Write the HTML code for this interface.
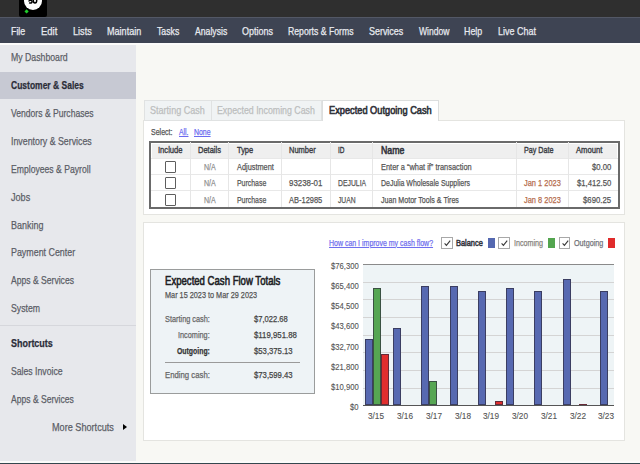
<!DOCTYPE html><html><head><meta charset="utf-8"><style>*{margin:0;padding:0}html,body{width:640px;height:464px;overflow:hidden;background:#f8f8f4}
.t{-webkit-text-stroke:0.25px currentColor;position:absolute;white-space:nowrap;line-height:normal;transform-origin:0 0;font-family:"Liberation Sans",sans-serif}</style></head><body><div style="position:absolute;left:0px;top:0px;width:640px;height:17px;background:#2f2f2f"></div>
<div style="position:absolute;left:19px;top:0px;width:28px;height:17px;background:#000;border-radius:0 0 2px 2px"></div>
<div style="position:absolute;left:24px;top:-8px;width:18px;height:18px;border-radius:50%;background:#fff"></div>
<svg style="position:absolute;left:0;top:0" width="60" height="17"><path d="M29.3,-1.2 L29.3,0.6 Q30.6,-0.3 31.6,0.6 Q32.5,1.6 31.7,2.6 Q30.5,3.6 29.2,2.6" fill="none" stroke="#000" stroke-width="1.5"/><ellipse cx="35" cy="-0.4" rx="1.75" ry="3.5" fill="none" stroke="#000" stroke-width="1.5"/></svg>
<div style="position:absolute;left:24.5px;top:10px;width:3.2px;height:3.2px;background:#1fcc2a;transform:rotate(45deg)"></div>
<div style="position:absolute;left:0px;top:17px;width:640px;height:26px;background:#3e4453;box-shadow:inset 0 1px 0 #535866"></div>
<div class="t" style="left:11.25px;top:24.73px;font-size:10.8px;font-weight:400;color:#e9ebf0;transform:scaleX(0.8190);">File</div>
<div class="t" style="left:40.75px;top:24.73px;font-size:10.8px;font-weight:400;color:#e9ebf0;transform:scaleX(0.8733);">Edit</div>
<div class="t" style="left:72.50px;top:24.73px;font-size:10.8px;font-weight:400;color:#e9ebf0;transform:scaleX(0.8444);">Lists</div>
<div class="t" style="left:107.00px;top:24.73px;font-size:10.8px;font-weight:400;color:#e9ebf0;transform:scaleX(0.8390);">Maintain</div>
<div class="t" style="left:157.00px;top:24.73px;font-size:10.8px;font-weight:400;color:#e9ebf0;transform:scaleX(0.8060);">Tasks</div>
<div class="t" style="left:194.50px;top:24.73px;font-size:10.8px;font-weight:400;color:#e9ebf0;transform:scaleX(0.8019);">Analysis</div>
<div class="t" style="left:242.00px;top:24.73px;font-size:10.8px;font-weight:400;color:#e9ebf0;transform:scaleX(0.8330);">Options</div>
<div class="t" style="left:288.25px;top:24.73px;font-size:10.8px;font-weight:400;color:#e9ebf0;transform:scaleX(0.8025);">Reports &amp; Forms</div>
<div class="t" style="left:368.75px;top:24.73px;font-size:10.8px;font-weight:400;color:#e9ebf0;transform:scaleX(0.8269);">Services</div>
<div class="t" style="left:418.75px;top:24.73px;font-size:10.8px;font-weight:400;color:#e9ebf0;transform:scaleX(0.7935);">Window</div>
<div class="t" style="left:464.25px;top:24.73px;font-size:10.8px;font-weight:400;color:#e9ebf0;transform:scaleX(0.8215);">Help</div>
<div class="t" style="left:497.50px;top:24.73px;font-size:10.8px;font-weight:400;color:#e9ebf0;transform:scaleX(0.8328);">Live Chat</div>
<div style="position:absolute;left:136px;top:44px;width:504px;height:418px;background:#f8f8f4"></div>
<div style="position:absolute;left:0px;top:44px;width:136px;height:418px;background:#e7e8ec"></div>
<div style="position:absolute;left:0px;top:43px;width:640px;height:2px;background:#fcfcfb"></div>
<div style="position:absolute;left:0px;top:461px;width:640px;height:2px;background:#fbfbfa"></div>
<div style="position:absolute;left:0px;top:462.7px;width:640px;height:1.3px;background:#34474e"></div>
<div style="position:absolute;left:0px;top:72px;width:136px;height:27px;background:#c7c9d3"></div>
<div style="position:absolute;left:0px;top:324.5px;width:136px;height:1px;background:#d6d7dc"></div>
<div class="t" style="left:11.20px;top:49.80px;font-size:11.6px;font-weight:400;color:#5b5d66;transform:scaleX(0.7516);">My Dashboard</div>
<div class="t" style="left:11.20px;top:77.90px;font-size:11.6px;font-weight:700;color:#2b2d38;transform:scaleX(0.7332);">Customer &amp; Sales</div>
<div class="t" style="left:11.20px;top:105.70px;font-size:11.6px;font-weight:400;color:#5b5d66;transform:scaleX(0.7404);">Vendors &amp; Purchases</div>
<div class="t" style="left:11.20px;top:134.00px;font-size:11.6px;font-weight:400;color:#5b5d66;transform:scaleX(0.7596);">Inventory &amp; Services</div>
<div class="t" style="left:11.20px;top:161.90px;font-size:11.6px;font-weight:400;color:#5b5d66;transform:scaleX(0.7438);">Employees &amp; Payroll</div>
<div class="t" style="left:11.20px;top:189.80px;font-size:11.6px;font-weight:400;color:#5b5d66;transform:scaleX(0.7837);">Jobs</div>
<div class="t" style="left:11.20px;top:217.70px;font-size:11.6px;font-weight:400;color:#5b5d66;transform:scaleX(0.7729);">Banking</div>
<div class="t" style="left:11.20px;top:244.90px;font-size:11.6px;font-weight:400;color:#5b5d66;transform:scaleX(0.7659);">Payment Center</div>
<div class="t" style="left:11.20px;top:273.30px;font-size:11.6px;font-weight:400;color:#5b5d66;transform:scaleX(0.7403);">Apps &amp; Services</div>
<div class="t" style="left:11.20px;top:301.10px;font-size:11.6px;font-weight:400;color:#5b5d66;transform:scaleX(0.7524);">System</div>
<div class="t" style="left:11.20px;top:335.90px;font-size:11.6px;font-weight:700;color:#2b2d38;transform:scaleX(0.7721);">Shortcuts</div>
<div class="t" style="left:11.20px;top:363.90px;font-size:11.6px;font-weight:400;color:#5b5d66;transform:scaleX(0.7479);">Sales Invoice</div>
<div class="t" style="left:11.20px;top:391.90px;font-size:11.6px;font-weight:400;color:#5b5d66;transform:scaleX(0.7380);">Apps &amp; Services</div>
<div class="t" style="left:51.90px;top:419.70px;font-size:11.6px;font-weight:400;color:#5b5d66;transform:scaleX(0.7871);">More Shortcuts</div>
<div style="position:absolute;left:122.5px;top:424.3px;width:0;height:0;border-left:4.5px solid #000;border-top:3px solid transparent;border-bottom:3px solid transparent"></div>
<div style="position:absolute;left:143px;top:120px;width:482px;height:94px;background:#fff;border:1px solid #e4e4e0;box-sizing:border-box"></div>
<div style="position:absolute;left:143px;top:120px;width:482px;height:95px;background:#fff;border:1px solid #e4e4e0;box-sizing:border-box"></div>
<div style="position:absolute;left:144px;top:100px;width:68px;height:21px;background:#f0f3f4;border:1px solid #e0e2e2;box-sizing:border-box"></div>
<div style="position:absolute;left:211px;top:100px;width:111px;height:21px;background:#f0f3f4;border:1px solid #e0e2e2;box-sizing:border-box"></div>
<div style="position:absolute;left:322px;top:100px;width:117px;height:21px;background:#fff;border:1px solid #dcdede;border-bottom:none;box-sizing:border-box"></div>
<div class="t" style="left:150.40px;top:105.09px;font-size:10.4px;font-weight:400;color:#bcbebe;transform:scaleX(0.8712);">Starting Cash</div>
<div class="t" style="left:217.20px;top:105.09px;font-size:10.4px;font-weight:400;color:#bcbebe;transform:scaleX(0.8476);">Expected Incoming Cash</div>
<div class="t" style="left:329.30px;top:103.91px;font-size:10.6px;font-weight:400;color:#2e3038;transform:scaleX(0.8723);-webkit-text-stroke:0.6px #2e3038">Expected Outgoing Cash</div>
<div class="t" style="left:151.00px;top:127.14px;font-size:8.8px;font-weight:400;color:#555;transform:scaleX(0.7992);">Select:</div>
<div class="t" style="left:178.50px;top:127.14px;font-size:8.8px;font-weight:400;color:#6b6bf0;transform:scaleX(0.7772);text-decoration:underline">All.</div>
<div class="t" style="left:194.00px;top:127.14px;font-size:8.8px;font-weight:400;color:#6b6bf0;transform:scaleX(0.7889);text-decoration:underline">None</div>
<div style="position:absolute;left:149px;top:141px;width:471px;height:68px;border:2px solid #6a6a6a;box-sizing:border-box;background:#fff"></div>
<div style="position:absolute;left:152px;top:144px;width:465px;height:14px;background:#efefef"></div>
<div style="position:absolute;left:151px;top:174px;width:467px;height:1px;background:#e8e8e8"></div>
<div style="position:absolute;left:151px;top:190px;width:467px;height:1px;background:#e8e8e8"></div>
<div style="position:absolute;left:151px;top:158px;width:467px;height:1px;background:#e8e8e8"></div>
<div style="position:absolute;left:189.6px;top:142px;width:1px;height:65px;background:#e6e6e6"></div>
<div style="position:absolute;left:228px;top:142px;width:1px;height:65px;background:#e6e6e6"></div>
<div style="position:absolute;left:281px;top:142px;width:1px;height:65px;background:#e6e6e6"></div>
<div style="position:absolute;left:330px;top:142px;width:1px;height:65px;background:#e6e6e6"></div>
<div style="position:absolute;left:372px;top:142px;width:1px;height:65px;background:#e6e6e6"></div>
<div style="position:absolute;left:516px;top:142px;width:1px;height:65px;background:#e6e6e6"></div>
<div style="position:absolute;left:568px;top:142px;width:1px;height:65px;background:#e6e6e6"></div>
<div class="t" style="left:157.80px;top:143.99px;font-size:9.4px;font-weight:400;color:#3a3c44;transform:scaleX(0.8115);-webkit-text-stroke:0.38px #3a3c44">Include</div>
<div class="t" style="left:198.40px;top:143.99px;font-size:9.4px;font-weight:400;color:#3a3c44;transform:scaleX(0.8004);-webkit-text-stroke:0.38px #3a3c44">Details</div>
<div class="t" style="left:236.60px;top:143.99px;font-size:9.4px;font-weight:400;color:#3a3c44;transform:scaleX(0.7949);-webkit-text-stroke:0.38px #3a3c44">Type</div>
<div class="t" style="left:288.90px;top:143.99px;font-size:9.4px;font-weight:400;color:#3a3c44;transform:scaleX(0.7985);-webkit-text-stroke:0.38px #3a3c44">Number</div>
<div class="t" style="left:337.90px;top:143.99px;font-size:9.4px;font-weight:400;color:#3a3c44;transform:scaleX(0.6915);-webkit-text-stroke:0.38px #3a3c44">ID</div>
<div class="t" style="left:523.70px;top:143.99px;font-size:9.4px;font-weight:400;color:#3a3c44;transform:scaleX(0.7630);-webkit-text-stroke:0.38px #3a3c44">Pay Date</div>
<div class="t" style="left:576.00px;top:143.99px;font-size:9.4px;font-weight:400;color:#3a3c44;transform:scaleX(0.8181);-webkit-text-stroke:0.38px #3a3c44">Amount</div>
<div class="t" style="left:380.80px;top:144.23px;font-size:10.8px;font-weight:400;color:#33353d;transform:scaleX(0.8121);-webkit-text-stroke:0.6px #33353d">Name</div>
<div style="position:absolute;left:165px;top:161px;width:11px;height:11.5px;border:1.3px solid #5e5e5e;border-radius:1px;box-sizing:border-box;background:#fff"></div>
<div class="t" style="left:204.20px;top:161.03px;font-size:9.8px;font-weight:400;color:#8e8e8e;transform:scaleX(0.7223);">N/A</div>
<div style="position:absolute;left:165px;top:177px;width:11px;height:11.5px;border:1.3px solid #5e5e5e;border-radius:1px;box-sizing:border-box;background:#fff"></div>
<div class="t" style="left:204.20px;top:176.93px;font-size:9.8px;font-weight:400;color:#8e8e8e;transform:scaleX(0.7223);">N/A</div>
<div style="position:absolute;left:165px;top:194px;width:11px;height:11.5px;border:1.3px solid #5e5e5e;border-radius:1px;box-sizing:border-box;background:#fff"></div>
<div class="t" style="left:204.20px;top:193.53px;font-size:9.8px;font-weight:400;color:#8e8e8e;transform:scaleX(0.7223);">N/A</div>
<div class="t" style="left:236.60px;top:161.03px;font-size:9.8px;font-weight:400;color:#555;transform:scaleX(0.7507);">Adjustment</div>
<div class="t" style="left:236.60px;top:176.93px;font-size:9.8px;font-weight:400;color:#555;transform:scaleX(0.7076);">Purchase</div>
<div class="t" style="left:236.60px;top:193.53px;font-size:9.8px;font-weight:400;color:#555;transform:scaleX(0.7076);">Purchase</div>
<div class="t" style="left:288.60px;top:176.93px;font-size:9.8px;font-weight:400;color:#555;transform:scaleX(0.8041);">93238-01</div>
<div class="t" style="left:288.60px;top:193.53px;font-size:9.8px;font-weight:400;color:#555;transform:scaleX(0.7639);">AB-12985</div>
<div class="t" style="left:337.80px;top:176.93px;font-size:9.8px;font-weight:400;color:#555;transform:scaleX(0.6973);">DEJULIA</div>
<div class="t" style="left:337.80px;top:193.53px;font-size:9.8px;font-weight:400;color:#555;transform:scaleX(0.6878);">JUAN</div>
<div class="t" style="left:380.50px;top:161.03px;font-size:9.8px;font-weight:400;color:#555;transform:scaleX(0.7569);">Enter a “what if” transaction</div>
<div class="t" style="left:380.50px;top:176.93px;font-size:9.8px;font-weight:400;color:#555;transform:scaleX(0.7143);">DeJulia Wholesale Suppliers</div>
<div class="t" style="left:380.50px;top:193.53px;font-size:9.8px;font-weight:400;color:#555;transform:scaleX(0.7236);">Juan Motor Tools &amp; Tires</div>
<div class="t" style="left:523.50px;top:176.93px;font-size:9.8px;font-weight:400;color:#b56b4b;transform:scaleX(0.7588);">Jan 1 2023</div>
<div class="t" style="left:523.50px;top:193.53px;font-size:9.8px;font-weight:400;color:#b56b4b;transform:scaleX(0.7588);">Jan 8 2023</div>
<div class="t" style="left:592.00px;top:161.03px;font-size:9.8px;font-weight:400;color:#555;transform:scaleX(0.7871);">$0.00</div>
<div class="t" style="left:577.00px;top:176.93px;font-size:9.8px;font-weight:400;color:#555;transform:scaleX(0.7867);">$1,412.50</div>
<div class="t" style="left:583.20px;top:193.53px;font-size:9.8px;font-weight:400;color:#555;transform:scaleX(0.7932);">$690.25</div>
<div style="position:absolute;left:143px;top:222px;width:482px;height:219px;background:#fff;border:1px solid #e4e4e0;box-sizing:border-box"></div>
<div style="position:absolute;left:150px;top:269px;width:164.5px;height:124.5px;background:#eef3f6;border:1.6px solid #9a9c9c;box-sizing:border-box"></div>
<div class="t" style="left:165.30px;top:274.16px;font-size:12.2px;font-weight:400;color:#1e1f26;transform:scaleX(0.7861);-webkit-text-stroke:0.6px #1e1f26">Expected Cash Flow Totals</div>
<div class="t" style="left:165.30px;top:288.71px;font-size:9.6px;font-weight:400;color:#555;transform:scaleX(0.7603);">Mar 15 2023 to Mar 29 2023</div>
<div class="t" style="left:165.00px;top:313.49px;font-size:9.4px;font-weight:400;color:#666;transform:scaleX(0.7830);">Starting cash:</div>
<div class="t" style="left:178.25px;top:329.49px;font-size:9.4px;font-weight:400;color:#666;transform:scaleX(0.7792);">Incoming:</div>
<div class="t" style="left:177.00px;top:345.29px;font-size:9.4px;font-weight:700;color:#333;transform:scaleX(0.7351);">Outgoing:</div>
<div class="t" style="left:165.00px;top:368.99px;font-size:9.4px;font-weight:400;color:#666;transform:scaleX(0.8280);">Ending cash:</div>
<div class="t" style="left:253.75px;top:313.49px;font-size:9.4px;font-weight:400;color:#444;transform:scaleX(0.8070);">$7,022.68</div>
<div class="t" style="left:253.75px;top:329.49px;font-size:9.4px;font-weight:400;color:#444;transform:scaleX(0.8337);">$119,951.88</div>
<div class="t" style="left:253.75px;top:345.29px;font-size:9.4px;font-weight:400;color:#444;transform:scaleX(0.8236);">$53,375.13</div>
<div class="t" style="left:253.75px;top:368.99px;font-size:9.4px;font-weight:400;color:#444;transform:scaleX(0.8236);">$73,599.43</div>
<div style="position:absolute;left:165px;top:362px;width:134.5px;height:1px;background:#9a9a9a"></div>
<div class="t" style="left:329.10px;top:237.67px;font-size:9.2px;font-weight:400;color:#6f6fee;transform:scaleX(0.7604);text-decoration:underline">How can I improve my cash flow?</div>
<div style="position:absolute;left:441.4px;top:237.3px;width:11.3px;height:12px;border:1px solid #a8a8a8;box-sizing:border-box;background:#fff"></div>
<svg style="position:absolute;left:441.4px;top:237.3px" width="12" height="12"><polyline points="3.6,6.4 5.4,8.4 9.2,3.6" fill="none" stroke="#3a3a3a" stroke-width="1.1"/></svg>
<div style="position:absolute;left:498.4px;top:237.3px;width:11.3px;height:12px;border:1px solid #a8a8a8;box-sizing:border-box;background:#fff"></div>
<svg style="position:absolute;left:498.4px;top:237.3px" width="12" height="12"><polyline points="3.6,6.4 5.4,8.4 9.2,3.6" fill="none" stroke="#3a3a3a" stroke-width="1.1"/></svg>
<div style="position:absolute;left:558.5px;top:237.3px;width:11.3px;height:12px;border:1px solid #a8a8a8;box-sizing:border-box;background:#fff"></div>
<svg style="position:absolute;left:558.5px;top:237.3px" width="12" height="12"><polyline points="3.6,6.4 5.4,8.4 9.2,3.6" fill="none" stroke="#3a3a3a" stroke-width="1.1"/></svg>
<div class="t" style="left:456.20px;top:237.31px;font-size:9.6px;font-weight:400;color:#33353d;transform:scaleX(0.7725);-webkit-text-stroke:0.55px #33353d">Balance</div>
<div class="t" style="left:513.60px;top:237.31px;font-size:9.6px;font-weight:400;color:#857f7a;transform:scaleX(0.7470);">Incoming</div>
<div class="t" style="left:573.80px;top:237.31px;font-size:9.6px;font-weight:400;color:#6f7178;transform:scaleX(0.7519);">Outgoing</div>
<div style="position:absolute;left:487.7px;top:238.2px;width:7.3px;height:10.3px;background:#5468b0"></div>
<div style="position:absolute;left:547.8px;top:238.2px;width:7.3px;height:10.3px;background:#53a54f"></div>
<div style="position:absolute;left:607.8px;top:238.2px;width:7.3px;height:10.3px;background:#e02b2b"></div>
<div style="position:absolute;left:362.8px;top:264px;width:251px;height:141.4px;background:#eef4f6"></div>
<div style="position:absolute;left:362.8px;top:264px;width:251px;height:1px;background:#8a8a8a"></div>
<div style="position:absolute;left:362.8px;top:282px;width:251px;height:1px;background:#d4d4d4"></div>
<div style="position:absolute;left:362.8px;top:299px;width:251px;height:1px;background:#d4d4d4"></div>
<div style="position:absolute;left:362.8px;top:317px;width:251px;height:1px;background:#d4d4d4"></div>
<div style="position:absolute;left:362.8px;top:335px;width:251px;height:1px;background:#d4d4d4"></div>
<div style="position:absolute;left:362.8px;top:352px;width:251px;height:1px;background:#d4d4d4"></div>
<div style="position:absolute;left:362.8px;top:370px;width:251px;height:1px;background:#d4d4d4"></div>
<div style="position:absolute;left:362.8px;top:388px;width:251px;height:1px;background:#d4d4d4"></div>
<div style="position:absolute;left:362.8px;top:405px;width:251px;height:1px;background:#555"></div>
<div class="t" style="left:330.74px;top:259.79px;font-size:9.4px;font-weight:400;color:#555;transform:scaleX(0.8200);-webkit-text-stroke:0.12px #555">$76,300</div>
<div class="t" style="left:330.74px;top:279.99px;font-size:9.4px;font-weight:400;color:#555;transform:scaleX(0.8200);-webkit-text-stroke:0.12px #555">$65,400</div>
<div class="t" style="left:330.74px;top:300.19px;font-size:9.4px;font-weight:400;color:#555;transform:scaleX(0.8200);-webkit-text-stroke:0.12px #555">$54,500</div>
<div class="t" style="left:330.74px;top:320.39px;font-size:9.4px;font-weight:400;color:#555;transform:scaleX(0.8200);-webkit-text-stroke:0.12px #555">$43,600</div>
<div class="t" style="left:330.74px;top:340.59px;font-size:9.4px;font-weight:400;color:#555;transform:scaleX(0.8200);-webkit-text-stroke:0.12px #555">$32,700</div>
<div class="t" style="left:330.74px;top:360.79px;font-size:9.4px;font-weight:400;color:#555;transform:scaleX(0.8200);-webkit-text-stroke:0.12px #555">$21,800</div>
<div class="t" style="left:330.74px;top:380.99px;font-size:9.4px;font-weight:400;color:#555;transform:scaleX(0.8200);-webkit-text-stroke:0.12px #555">$10,900</div>
<div class="t" style="left:350.03px;top:401.19px;font-size:9.4px;font-weight:400;color:#555;transform:scaleX(0.8200);-webkit-text-stroke:0.12px #555">$0</div>
<div style="position:absolute;left:364.8px;top:338.5px;width:8.1px;height:66.89999999999998px;background:#5769b1;box-shadow:inset 0 0 0 1px rgba(45,42,60,0.68)"></div>
<div style="position:absolute;left:393.1px;top:327.8px;width:8.1px;height:77.59999999999997px;background:#5769b1;box-shadow:inset 0 0 0 1px rgba(45,42,60,0.68)"></div>
<div style="position:absolute;left:421.2px;top:285.5px;width:8.1px;height:119.89999999999998px;background:#5769b1;box-shadow:inset 0 0 0 1px rgba(45,42,60,0.68)"></div>
<div style="position:absolute;left:449.7px;top:285.5px;width:8.1px;height:119.89999999999998px;background:#5769b1;box-shadow:inset 0 0 0 1px rgba(45,42,60,0.68)"></div>
<div style="position:absolute;left:478.3px;top:290.7px;width:8.1px;height:114.69999999999999px;background:#5769b1;box-shadow:inset 0 0 0 1px rgba(45,42,60,0.68)"></div>
<div style="position:absolute;left:506px;top:288px;width:8.1px;height:117.39999999999998px;background:#5769b1;box-shadow:inset 0 0 0 1px rgba(45,42,60,0.68)"></div>
<div style="position:absolute;left:534px;top:290.7px;width:8.1px;height:114.69999999999999px;background:#5769b1;box-shadow:inset 0 0 0 1px rgba(45,42,60,0.68)"></div>
<div style="position:absolute;left:562.5px;top:279px;width:8.1px;height:126.39999999999998px;background:#5769b1;box-shadow:inset 0 0 0 1px rgba(45,42,60,0.68)"></div>
<div style="position:absolute;left:600px;top:290.8px;width:8.1px;height:114.59999999999997px;background:#5769b1;box-shadow:inset 0 0 0 1px rgba(45,42,60,0.68)"></div>
<div style="position:absolute;left:372.9px;top:288px;width:8.1px;height:117.39999999999998px;background:#56a653;box-shadow:inset 0 0 0 1px rgba(45,42,60,0.68)"></div>
<div style="position:absolute;left:381px;top:354px;width:8.1px;height:51.39999999999998px;background:#e02e2e;box-shadow:inset 0 0 0 1px rgba(45,42,60,0.68)"></div>
<div style="position:absolute;left:429.4px;top:380.6px;width:8.1px;height:24.799999999999955px;background:#56a653;box-shadow:inset 0 0 0 1px rgba(45,42,60,0.68)"></div>
<div style="position:absolute;left:494.5px;top:401px;width:8.1px;height:4.399999999999977px;background:#e02e2e;box-shadow:inset 0 0 0 1px rgba(45,42,60,0.68)"></div>
<div style="position:absolute;left:578.8px;top:403.8px;width:8.1px;height:1.599999999999966px;background:#e02e2e;box-shadow:inset 0 0 0 1px rgba(45,42,60,0.68)"></div>
<div class="t" style="left:368.40px;top:410.22px;font-size:9.7px;font-weight:400;color:#555;transform:scaleX(0.8476);-webkit-text-stroke:0.12px #555">3/15</div>
<div class="t" style="left:397.15px;top:410.22px;font-size:9.7px;font-weight:400;color:#555;transform:scaleX(0.8476);-webkit-text-stroke:0.12px #555">3/16</div>
<div class="t" style="left:425.90px;top:410.22px;font-size:9.7px;font-weight:400;color:#555;transform:scaleX(0.8476);-webkit-text-stroke:0.12px #555">3/17</div>
<div class="t" style="left:454.65px;top:410.22px;font-size:9.7px;font-weight:400;color:#555;transform:scaleX(0.8476);-webkit-text-stroke:0.12px #555">3/18</div>
<div class="t" style="left:483.40px;top:410.22px;font-size:9.7px;font-weight:400;color:#555;transform:scaleX(0.8476);-webkit-text-stroke:0.12px #555">3/19</div>
<div class="t" style="left:512.15px;top:410.22px;font-size:9.7px;font-weight:400;color:#555;transform:scaleX(0.8476);-webkit-text-stroke:0.12px #555">3/20</div>
<div class="t" style="left:540.90px;top:410.22px;font-size:9.7px;font-weight:400;color:#555;transform:scaleX(0.8476);-webkit-text-stroke:0.12px #555">3/21</div>
<div class="t" style="left:569.65px;top:410.22px;font-size:9.7px;font-weight:400;color:#555;transform:scaleX(0.8476);-webkit-text-stroke:0.12px #555">3/22</div>
<div class="t" style="left:598.40px;top:410.22px;font-size:9.7px;font-weight:400;color:#555;transform:scaleX(0.8476);-webkit-text-stroke:0.12px #555">3/23</div></body></html>
